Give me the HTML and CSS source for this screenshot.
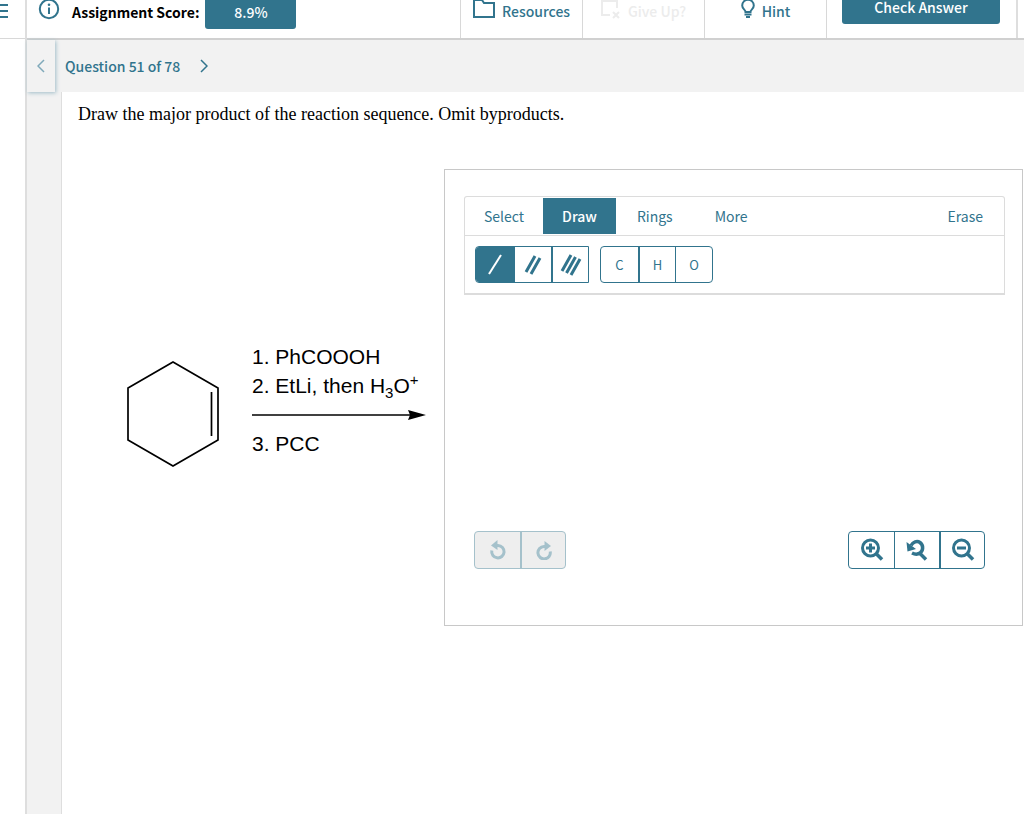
FILE: index.html
```html
<!DOCTYPE html>
<html lang="en">
<head>
    <meta charset="utf-8">
    <title>Question 51 of 78</title>
    <link rel="stylesheet" href="styles.css">
</head>
<body>

<div class="app">
    <aside class="rail">
        <button class="menu" aria-label="Menu">
            <svg width="8" height="20" viewBox="0 0 8 20"><path d="M0 5H8M0 11H8M0 17H8" stroke="#31748d" stroke-width="2"/></svg>
        </button>
    </aside>

    <div class="main">
        <header class="topbar">
            <svg class="info" width="22" height="20" viewBox="0 0 22 20" fill="none" stroke="#31748d" stroke-width="2">
                <circle cx="11" cy="9" r="9.2"/>
                <path d="M11 7.500V14"/>
                <circle cx="11" cy="4.800" r="1.300" fill="#31748d" stroke="none"/>
            </svg>
            <span class="score-label">Assignment Score:</span>
            <span class="score">8.9%</span>

            <nav class="tools">
                <a class="tool resources" href="#">
                    <svg width="22" height="20" viewBox="0 0 22 20" fill="none" stroke="#31748d" stroke-width="2"><path d="M1 -1V17H21V3H11L9 0H1"/></svg>
                    Resources
                </a>
                <button class="tool give-up" disabled>
                    <svg width="20" height="20" viewBox="0 0 20 20" fill="none" stroke="#ececec" stroke-width="2"><path d="M9 15H1V1H16V8M12 12L18 18M18 12L12 18"/></svg>
                    Give Up?
                </button>
                <button class="tool hint">
                    <svg width="14" height="20" viewBox="0 0 14 20" fill="none" stroke="#31748d" stroke-width="2"><path d="M4.500 12C4.500 9.500 1.200 9 1.200 5.500A5.800 5.800 0 0 1 12.800 5.500C12.800 9 9.500 9.500 9.500 12ZM3.500 14.500H10.500M5 17H9"/></svg>
                    Hint
                </button>
                <div class="submit">
                    <button class="check">Check Answer</button>
                </div>
            </nav>
        </header>

        <div class="question-nav">
            <button class="previous" aria-label="Previous question">
                <svg width="8" height="14" viewBox="0 0 8 14" fill="none" stroke="#7fa9ba" stroke-width="1.500"><path d="M7 1L1 7L7 13"/></svg>
            </button>
            <span class="counter">Question 51 of 78</span>
            <button class="next" aria-label="Next question">
                <svg width="8" height="14" viewBox="0 0 8 14" fill="none" stroke="#31748d" stroke-width="1.500"><path d="M1 1L7 7L1 13"/></svg>
            </button>
        </div>

        <main class="content">
            <p class="prompt">Draw the major product of the reaction sequence. Omit byproducts.</p>

            <div class="workspace">
                <div class="reaction">
                    <svg width="94" height="106" viewBox="0 0 94 106" fill="none" stroke="#000" stroke-width="1.700">
                        <path d="M47 1L92 27V79L47 105L2 79V27ZM85.500 31V75"/>
                    </svg>
                    <div class="steps">
                        <div>1. PhCOOOH</div>
                        <div>2. EtLi, then H<sub>3</sub>O<sup>+</sup></div>
                        <svg width="174" height="29" viewBox="0 0 174 29"><path d="M0 15H160" stroke="#000" stroke-width="1.700"/><path d="M156 10L174 15L156 20L158 15Z"/></svg>
                        <div>3. PCC</div>
                    </div>
                </div>

                <section class="sketcher">
                    <div class="toolbar">
                        <div class="tabs">
                            <button class="tab">Select</button>
                            <button class="tab active">Draw</button>
                            <button class="tab">Rings</button>
                            <button class="tab">More</button>
                            <button class="tab erase">Erase</button>
                        </div>
                        <div class="palette">
                            <div class="group bonds">
                                <button class="active" aria-label="Single bond">
                                    <svg width="28" height="28" viewBox="0 0 28 28"><path d="M8 23L20 4" stroke="#fff" stroke-width="2"/></svg>
                                </button>
                                <button aria-label="Double bond">
                                    <svg width="28" height="28" viewBox="0 0 28 28"><path d="M7 21L16 5M12 23L21 7" stroke="#31748d" stroke-width="3"/></svg>
                                </button>
                                <button aria-label="Triple bond">
                                    <svg width="28" height="28" viewBox="0 0 28 28"><path d="M5 20L14 4M9.500 22L18.500 6M14 24L23 8" stroke="#31748d" stroke-width="3"/></svg>
                                </button>
                            </div>
                            <div class="group atoms">
                                <button>C</button>
                                <button>H</button>
                                <button>O</button>
                            </div>
                        </div>
                    </div>

                    <div class="canvas"></div>

                    <div class="controls">
                        <div class="group large">
                            <button disabled aria-label="Undo">
                                <svg width="20" height="20" viewBox="0 0 20 20"><path d="M3.800 10.500A6.200 6.200 0 1 0 10 5.500H8" fill="none" stroke="#a5c1cb" stroke-width="3"/><path d="M3 5.500L9.500 0V10Z" fill="#a5c1cb"/></svg>
                            </button>
                            <button disabled aria-label="Redo">
                                <svg width="20" height="20" viewBox="0 0 20 20"><path d="M16.200 11.500A6.200 6.200 0 1 1 10 6.500H12" fill="none" stroke="#a5c1cb" stroke-width="3"/><path d="M17 6L10.500 1V11Z" fill="#a5c1cb"/></svg>
                            </button>
                        </div>
                        <div class="group large">
                            <button aria-label="Zoom in">
                                <svg width="24" height="24" viewBox="0 0 24 24" fill="none" stroke="#31748d" stroke-width="3"><circle cx="10.500" cy="10" r="8"/><path d="M16 15.500L22 21.500" stroke-width="3.500"/><path d="M6 10H15M10.500 5.500V14.500"/></svg>
                            </button>
                            <button aria-label="Reset zoom">
                                <svg width="24" height="24" viewBox="0 0 24 24" fill="none" stroke="#31748d" stroke-width="3"><path d="M6 7.500C8 4 12 2.500 15 4.500C19 7.500 18 13 15 15C12 17 9 16 7 15M15 15.500L21 21.500" stroke-width="3.500"/><path d="M1.500 4L2.500 13.500L11 11Z" fill="#31748d" stroke="none"/></svg>
                            </button>
                            <button aria-label="Zoom out">
                                <svg width="24" height="24" viewBox="0 0 24 24" fill="none" stroke="#31748d" stroke-width="3"><circle cx="10.500" cy="10" r="8"/><path d="M16 15.500L22 21.500" stroke-width="3.500"/><path d="M6 10H15"/></svg>
                            </button>
                        </div>
                    </div>
                </section>
            </div>
        </main>
    </div>
</div>

</body>
</html>
```
FILE: styles.css
```css
* {
    box-sizing: border-box;
}
body {
    margin: 0;
    font-family: "Noto Sans CJK SC", "Noto Sans", sans-serif;
    font-size: 14px;
    line-height: 20px;
    color: #000;
    background-color: #fff;
}
button {
    margin: 0;
    padding: 0;
    border: 0;
    background: none;
    font: inherit;
    color: #31748d;
}
svg {
    display: block;
    flex-shrink: 0;
}
.app {
    display: flex;
    min-height: 100vh;
}
.rail {
    width: 27px;
    border-right: 2px solid #dedede;
}
.menu {
    display: block;
    width: 100%;
    height: 39px;
    border-bottom: 1px solid #d8d8d8;
}
.menu svg {
    margin-bottom: 18px;
}
.main {
    flex: 1;
    min-width: 0;
    display: flex;
    flex-direction: column;
    background-color: #f2f2f2;
}

/* top bar */
.topbar {
    display: flex;
    align-items: flex-start;
    height: 40px;
    border-bottom: 2px solid #d0d0d0;
    background-color: #fff;
}
.info {
    margin: 0 12px 0 11px;
}
.score-label {
    padding-top: 2px;
    font-weight: bold;
    white-space: nowrap;
}
.score {
    width: 91px;
    height: 29px;
    margin-left: 6px;
    padding-top: 2px;
    border-radius: 0 0 3px 3px;
    background-color: #31748d;
    color: #fff;
    font-weight: 500;
    text-align: center;
}
.tools {
    display: flex;
    height: 38px;
    margin-left: auto;
    margin-right: 6px;
    border-right: 2px solid #dedede;
}
.tool {
    display: flex;
    justify-content: center;
    align-items: flex-start;
    gap: 7px;
    width: 122px;
    border-left: 1px solid #d8d8d8;
    color: #31748d;
    font-weight: 500;
    line-height: 22px;
    text-decoration: none;
}
.give-up {
    color: #ececec;
}
.submit {
    width: 190px;
    padding: 0 16px 0 15px;
    border-left: 1px solid #d8d8d8;
}
.check {
    display: block;
    width: 100%;
    height: 24px;
    padding-bottom: 10px;
    border-radius: 0 0 3px 3px;
    background-color: #31748d;
    color: #fff;
    font-weight: 500;
    line-height: 14px;
}

/* question navigation */
.question-nav {
    display: flex;
    align-items: center;
    height: 52px;
    color: #31748d;
    font-weight: 500;
}
.previous {
    display: flex;
    align-items: center;
    justify-content: center;
    width: 28px;
    height: 52px;
    box-shadow: 1px 1px 4px #9fbcc8;
}
.counter {
    margin: 0 20px 0 10px;
}

.content {
    flex: 1;
    margin-left: 34px;
    padding: 12px 1px 0 16px;
    border-left: 1px solid #dedede;
    background-color: #fff;
}
.prompt {
    margin: 0 0 45px;
    font-family: "Liberation Serif", serif;
    font-size: 18px;
}
.workspace {
    display: flex;
    align-items: flex-start;
}
.reaction {
    display: flex;
    align-items: center;
    width: 366px;
    padding: 173px 0 0 48px;
    font-family: "Liberation Sans", sans-serif;
    font-size: 21px;
    line-height: 29px;
}
.steps {
    margin: 0 0 27px 32px;
    white-space: nowrap;
}
.steps sub, .steps sup {
    font-size: 15px;
    line-height: 0;
}

/* structure editor */
.sketcher {
    flex: 1;
    min-width: 0;
    padding: 26px 17px 56px 19px;
    border: 1px solid #c8c8c8;
}
.toolbar {
    border: 1px solid #dcdcdc;
    border-bottom-width: 2px;
    border-radius: 3px 3px 0 0;
}
.tabs {
    display: flex;
    height: 39px;
    padding: 1px 0;
    border-bottom: 1px solid #dcdcdc;
}
.tab {
    padding: 0 19px;
}
.tab.active {
    background-color: #31748d;
    color: #fff;
    font-weight: 500;
}
.tab.active ~ .tab {
    padding: 0 21px;
}
.erase {
    margin-left: auto;
}
.palette {
    display: flex;
    gap: 11px;
    padding: 10px;
}
.group {
    display: flex;
    border: 1px solid #31748d;
    border-radius: 4px;
    overflow: hidden;
}
.group button {
    display: flex;
    align-items: center;
    justify-content: center;
    width: 37px;
    height: 35px;
    font-size: 13px;
}
.group button + button {
    border-left: 1px solid #31748d;
}
.group button:last-child,
.atoms button:nth-child(2) {
    border-left-width: 2px;
}
.atoms button:last-child {
    border-left-width: 1px;
}
.group .active {
    background-color: #31748d;
}
.bonds {
    border-radius: 4px 0 0 4px;
}
.bonds .active {
    width: 38px;
}
.canvas {
    height: 236px;
}
.controls {
    display: flex;
    justify-content: space-between;
    padding: 0 20px 0 10px;
}
.group.large button {
    width: 45px;
    height: 36px;
}
.group:has(button:disabled) {
    border-color: #a5c1cb;
    background-color: #eee;
}
.group button:disabled + button {
    border-color: #a5c1cb;
}
```
